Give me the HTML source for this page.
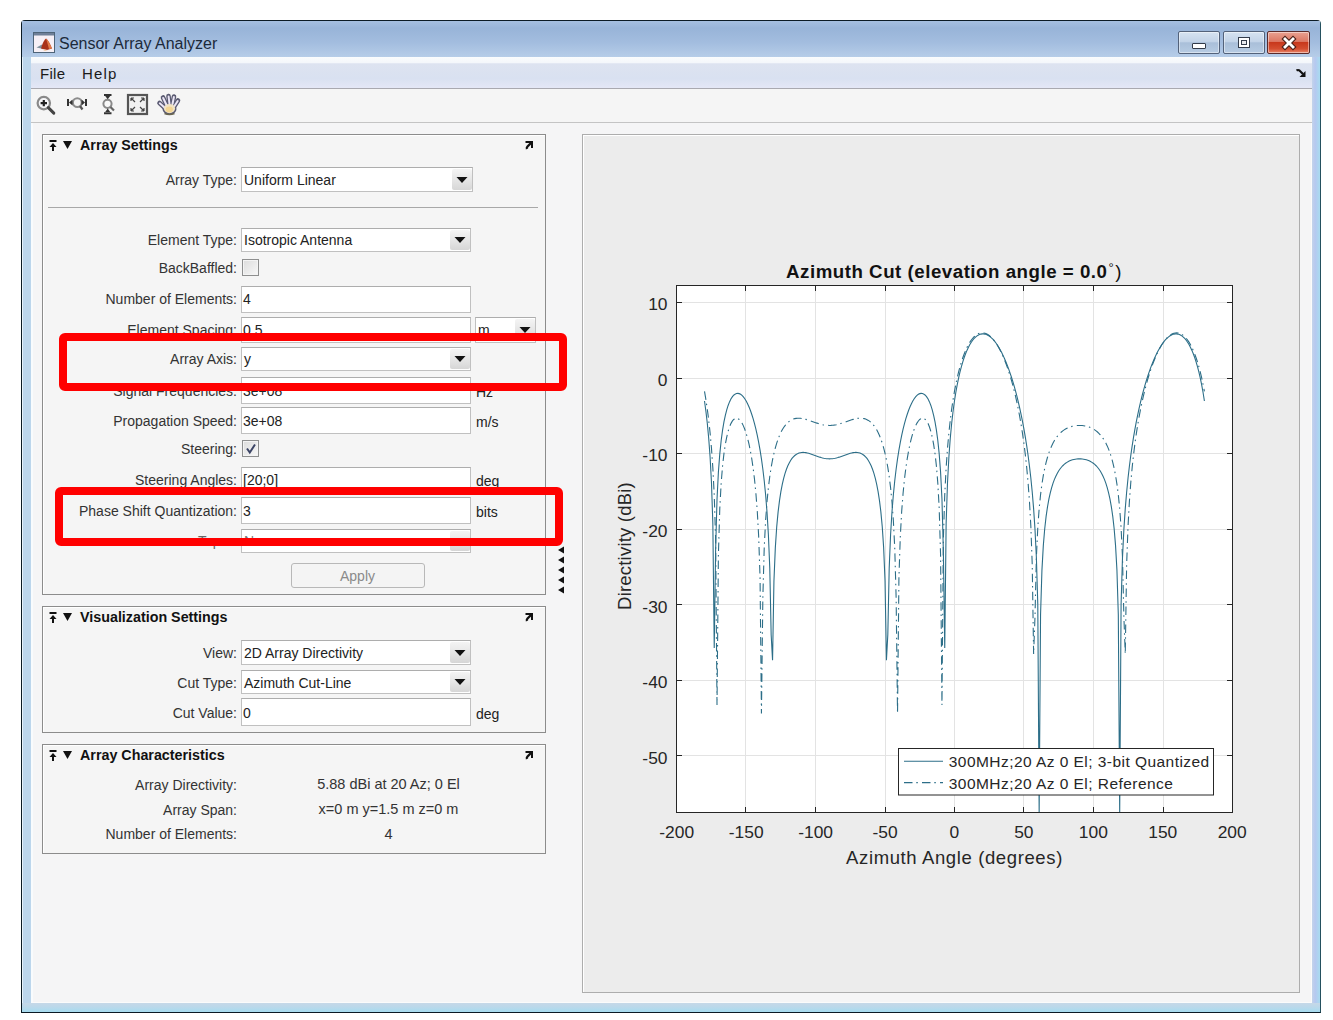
<!DOCTYPE html>
<html><head><meta charset="utf-8"><style>
*{margin:0;padding:0;box-sizing:content-box}
html,body{width:1333px;height:1020px;overflow:hidden;background:#fff;font-family:"Liberation Sans",sans-serif}
.t{position:absolute;white-space:nowrap;line-height:normal;-webkit-font-smoothing:antialiased}
#frame{position:absolute;left:21px;top:20px;width:1298px;height:991px;border:1px solid #0b1a24;border-right-color:#24505e;border-radius:4px 4px 0 0;background:#bcd6ec;
 box-shadow: inset 1px 1px 0 #e6f2fb, inset -1px -1px 0 #5e9ab0}
#titlebar{position:absolute;left:22px;top:21px;width:1298px;height:36px;background:linear-gradient(#a5bfe0 0%,#98b4d8 20%,#a3bddf 60%,#b6cde8 100%)}
.wb{position:absolute;top:31px;height:21px;border:1px solid #53627a;border-radius:2px;background:linear-gradient(#d6e3f1 0%,#c3d4e8 45%,#a9bfd9 52%,#b7cce3 100%);box-shadow:inset 0 0 0 1px rgba(255,255,255,0.45)}
.wb.close{border-color:#5a2a2a;background:linear-gradient(#e9a191 0%,#dc7864 45%,#c8381c 50%,#d44e30 80%,#e9866a 100%)}
#menubar{position:absolute;left:31px;top:57px;width:1281px;height:31px;background:linear-gradient(#fafcfd 0%,#f4f7fb 18%,#dde3f0 22%,#d9e1f1 70%,#e4e7f6 100%);border-bottom:1px solid #a9a9b0}
#toolbar{position:absolute;left:31px;top:89px;width:1281px;height:33px;background:#f5f5f5;border-bottom:1px solid #c4c4c4}
#client{position:absolute}
.panel{position:absolute;border:1px solid #8c8c8c;background:#f5f5f5;box-shadow:inset 1px 1px 0 #fff}
.tb{position:absolute;box-sizing:border-box;background:#fff;border:1px solid #c0c0c0;border-top-color:#adadad}
.ddb{position:absolute;background:linear-gradient(#f4f4f4 0%,#e6e6e6 50%,#d6d6d6 100%);border-radius:2px}
.cb{position:absolute;width:15px;height:15px;border:1px solid #8e8f8f;background:linear-gradient(135deg,#dcdcdc,#f8f8f8);box-shadow:inset 0 0 0 1px #f4f4f4}
.btn{position:absolute;border:1px solid #b8b8b8;border-radius:3px;background:#f4f4f4}
#plotpanel{position:absolute;left:582px;top:134px;width:716px;height:857px;border:1px solid #adadad;background:#ececec;box-shadow:inset 1px 1px 0 #fff}
.red{position:absolute;border:8px solid #f00;border-radius:6px}
</style></head>
<body>
<div id="frame"></div><div style="position:absolute;left:1312px;top:57px;width:8px;height:955px;background:linear-gradient(90deg,#c4d4ea,#b6c8f0 40%,#a8dcf0 100%)"></div><div style="position:absolute;left:22px;top:1003px;width:1298px;height:9px;background:linear-gradient(#c6d8e8 0%,#bcd8ea 40%,#a6dcf0 100%)"></div><div id="titlebar"></div><div id="client" style="left:31px;top:57px;width:1281px;height:946px;background:#f5f5f6;box-shadow:inset 2px 0 0 #f8fbfd, inset -1px -1px 0 #fbfbfb"></div><svg style="position:absolute;left:33px;top:32px" width="22" height="21" viewBox="0 0 22 21">
<rect x="0.5" y="0.5" width="21" height="20" fill="#f6f0f6" stroke="#4e6478"/>
<rect x="1" y="1" width="20" height="2.5" fill="#6f8098"/>
<path d="M3.5 15.5 L9 12.5 L10.5 17 Z" fill="#7f909c"/>
<path d="M8 16.5 Q10.5 8 13 6.5 Q15.5 8 19 16.5 L14 18 Z" fill="#a8321a"/>
<path d="M13 6.5 Q16 9 19 16.5 L16 17 Q14.5 11 13 6.5 Z" fill="#e07a48"/>
<path d="M9 17.5 L15 18 L12 19 Z" fill="#f0c8a0"/>
</svg><div class="t" style="left:59px;top:35.02px;font-size:16px;font-weight:normal;color:#1c2a3a;">Sensor Array Analyzer</div><div class="wb" style="left:1178px;width:40px"><div style="position:absolute;left:13px;top:11px;width:12px;height:4px;background:#fff;border:1px solid #333c4a;border-radius:1px"></div></div>
<div class="wb" style="left:1223px;width:40px"><div style="position:absolute;left:13.5px;top:4.5px;width:10px;height:9px;background:#fff;border:1.5px solid #333c4a;"></div><div style="position:absolute;left:17px;top:8px;width:4px;height:3px;border:1.5px solid #333c4a;background:#e8eaee"></div></div>
<div class="wb close" style="left:1267px;width:41px"><svg style="position:absolute;left:12px;top:3px" width="18" height="16" viewBox="0 0 18 16"><path d="M5 4 L13 12 M13 4 L5 12" stroke="#4a2018" stroke-width="5" stroke-linecap="square"/><path d="M5 4 L13 12 M13 4 L5 12" stroke="#fff" stroke-width="2.8" stroke-linecap="square"/></svg></div><div id="menubar"></div><div class="t" style="left:40px;top:65.42px;font-size:15px;font-weight:normal;color:#1a1a1a;letter-spacing:0.3px">File</div><div class="t" style="left:82px;top:65.42px;font-size:15px;font-weight:normal;color:#1a1a1a;letter-spacing:1.2px">Help</div><svg style="position:absolute;left:1295px;top:68px" width="12" height="10" viewBox="0 0 12 10"><path d="M1.5 2.5 Q3 1.5 4.5 2.5 L8 6" stroke="#111" stroke-width="2.2" fill="none"/><path d="M4.5 9 L10.5 9 L10.5 3 Z" fill="#111"/></svg><div id="toolbar"></div><svg style="position:absolute;left:34px;top:93px" width="150" height="24" viewBox="0 0 150 24">
 <g fill="none" stroke="#555" transform="translate(-0.7,0.6)">
  <circle cx="10.5" cy="9.5" r="6.2" stroke-width="2.2" stroke="#8a8a8a" fill="#f6f6f8"/>
  <path d="M15 14 L20.5 19.5" stroke-width="3" stroke-linecap="round" stroke="#444"/>
  <path d="M7.3 9.5 H13.7 M10.5 6.3 V12.7" stroke="#222" stroke-width="2.2"/>
 </g>
 <g fill="none" stroke="#555">
  <circle cx="43.3" cy="9.6" r="4.4" stroke-width="2" stroke="#8c8c8c"/>
  <path d="M46 13 L48.5 16.5" stroke-width="2.2" stroke="#555"/>
  <path d="M34 6 V13 M52 6 V13" stroke="#333" stroke-width="2"/>
  <path d="M35 9.5 L38.5 6.5 V12.5 Z M51 9.5 L47.5 6.5 V12.5 Z" fill="#333" stroke="none"/>
 </g>
 <g fill="none" stroke="#555">
  <circle cx="73.5" cy="10.8" r="4.1" stroke-width="2" stroke="#8a8a8a" fill="#f8f8f8"/>
  <path d="M76.5 14 L80 17.5" stroke-width="2.2" stroke="#666"/>
  <path d="M70 2 H77.5 M70 20.2 H77.5" stroke="#333" stroke-width="2"/>
  <path d="M73.7 6.2 L71.2 3 H76.2 Z M73.7 15.6 L71.2 19 H76.2 Z" fill="#333" stroke="none"/>
 </g>
 <g>
  <rect x="94" y="2" width="19" height="19" fill="#f0f0f0" stroke="#555" stroke-width="2.2"/>
  <path d="M97 5 L101 9 M97 5 H100 M97 5 V8 M110 5 L106 9 M110 5 H107 M110 5 V8 M97 18 L101 14 M97 18 H100 M97 18 V15 M110 18 L106 14 M110 18 H107 M110 18 V15" stroke="#444" stroke-width="1.2" fill="none"/>
 </g>
 <g transform="translate(123,1)">
  <g stroke="#5a5a72" stroke-width="4.6" stroke-linecap="round" fill="none">
   <path d="M8 14 L2.5 9"/><path d="M9.5 11 L6 3.5"/><path d="M12.5 10 L11.5 2"/><path d="M15.5 10 L17 2.5"/><path d="M17.5 12 L21 6.5"/>
  </g>
  <ellipse cx="12.5" cy="15" rx="7" ry="5.8" fill="#5a5a72"/>
  <g stroke="#ebe6f6" stroke-width="2" stroke-linecap="round" fill="none">
   <path d="M8 14 L2.8 9.3"/><path d="M9.5 11 L6.2 4"/><path d="M12.5 10 L11.6 2.5"/><path d="M15.5 10 L16.9 3"/><path d="M17.5 12 L20.7 7"/>
  </g>
  <ellipse cx="12.5" cy="14.6" rx="5.6" ry="4.6" fill="#f1e3c4"/>
  <ellipse cx="12.3" cy="15.5" rx="3.6" ry="3" fill="#f3d592"/>
  <path d="M7.5 19.5 Q12.5 21.5 17.5 19.5" stroke="#6a6650" stroke-width="1.6" fill="none"/>
 </g>
</svg><div class="panel" style="left:42px;top:134px;width:502px;height:459px"></div><svg style="position:absolute;left:49px;top:140px" width="24" height="12" viewBox="0 0 24 12">
<path d="M0.5 1 H7.5" stroke="#111" stroke-width="2"/><path d="M4 3 L0.5 7 H7.5 Z" fill="#111"/><path d="M4 6 V11" stroke="#111" stroke-width="2"/>
<path d="M14 1 H23 L18.5 9 Z" fill="#111"/></svg><div class="t" style="left:80px;top:136.56px;font-size:14.3px;font-weight:bold;color:#111;">Array Settings</div><svg style="position:absolute;left:524px;top:140px" width="10" height="10" viewBox="0 0 10 10"><path d="M1.5 2 H8 V8" stroke="#111" stroke-width="2" fill="none"/><path d="M7.5 2.5 L3.5 6.5 Q2.5 7.5 3 9" stroke="#111" stroke-width="2.4" fill="none"/></svg><div class="panel" style="left:42px;top:606px;width:502px;height:125px"></div><svg style="position:absolute;left:49px;top:612px" width="24" height="12" viewBox="0 0 24 12">
<path d="M0.5 1 H7.5" stroke="#111" stroke-width="2"/><path d="M4 3 L0.5 7 H7.5 Z" fill="#111"/><path d="M4 6 V11" stroke="#111" stroke-width="2"/>
<path d="M14 1 H23 L18.5 9 Z" fill="#111"/></svg><div class="t" style="left:80px;top:608.56px;font-size:14.3px;font-weight:bold;color:#111;">Visualization Settings</div><svg style="position:absolute;left:524px;top:612px" width="10" height="10" viewBox="0 0 10 10"><path d="M1.5 2 H8 V8" stroke="#111" stroke-width="2" fill="none"/><path d="M7.5 2.5 L3.5 6.5 Q2.5 7.5 3 9" stroke="#111" stroke-width="2.4" fill="none"/></svg><div class="panel" style="left:42px;top:744px;width:502px;height:108px"></div><svg style="position:absolute;left:49px;top:750px" width="24" height="12" viewBox="0 0 24 12">
<path d="M0.5 1 H7.5" stroke="#111" stroke-width="2"/><path d="M4 3 L0.5 7 H7.5 Z" fill="#111"/><path d="M4 6 V11" stroke="#111" stroke-width="2"/>
<path d="M14 1 H23 L18.5 9 Z" fill="#111"/></svg><div class="t" style="left:80px;top:746.56px;font-size:14.3px;font-weight:bold;color:#111;">Array Characteristics</div><svg style="position:absolute;left:524px;top:750px" width="10" height="10" viewBox="0 0 10 10"><path d="M1.5 2 H8 V8" stroke="#111" stroke-width="2" fill="none"/><path d="M7.5 2.5 L3.5 6.5 Q2.5 7.5 3 9" stroke="#111" stroke-width="2.4" fill="none"/></svg><div class="t" style="left:-563px;width:800px;text-align:right;top:171.83px;font-size:14px;font-weight:normal;color:#333;">Array Type:</div><div class="tb" style="left:241px;top:167px;width:232px;height:25px"></div><div class="ddb" style="left:452px;top:169px;width:20px;height:21px"></div><svg style="position:absolute;left:456px;top:175.5px" width="12" height="8" viewBox="0 0 12 8"><path d="M0.5 1 H11.5 L6 7 Z" fill="#111"/></svg><div class="t" style="left:244px;top:171.83px;font-size:14px;font-weight:normal;color:#222;">Uniform Linear</div><div class="t" style="left:-563px;width:800px;text-align:right;top:232.33px;font-size:14px;font-weight:normal;color:#333;">Element Type:</div><div class="tb" style="left:241px;top:228px;width:230px;height:24px"></div><div class="ddb" style="left:450px;top:230px;width:20px;height:20px"></div><svg style="position:absolute;left:454px;top:236.0px" width="12" height="8" viewBox="0 0 12 8"><path d="M0.5 1 H11.5 L6 7 Z" fill="#111"/></svg><div class="t" style="left:244px;top:232.33px;font-size:14px;font-weight:normal;color:#222;">Isotropic Antenna</div><div class="t" style="left:-563px;width:800px;text-align:right;top:260.33px;font-size:14px;font-weight:normal;color:#333;">BackBaffled:</div><div class="cb" style="left:242px;top:259px"></div><div class="t" style="left:-563px;width:800px;text-align:right;top:291.33px;font-size:14px;font-weight:normal;color:#333;">Number of Elements:</div><div class="tb" style="left:241px;top:285.5px;width:230px;height:27.0px"></div><div class="t" style="left:243px;top:291.33px;font-size:14px;font-weight:normal;color:#222;">4</div><div class="t" style="left:-563px;width:800px;text-align:right;top:322.08px;font-size:14px;font-weight:normal;color:#333;">Element Spacing:</div><div class="tb" style="left:241px;top:316.5px;width:230px;height:26.5px"></div><div class="t" style="left:243px;top:322.08px;font-size:14px;font-weight:normal;color:#222;">0.5</div><div class="tb" style="left:475px;top:317px;width:61px;height:26px"></div><div class="ddb" style="left:515px;top:319px;width:20px;height:22px"></div><svg style="position:absolute;left:519px;top:326.0px" width="12" height="8" viewBox="0 0 12 8"><path d="M0.5 1 H11.5 L6 7 Z" fill="#111"/></svg><div class="t" style="left:478px;top:322.33px;font-size:14px;font-weight:normal;color:#222;">m</div><div class="t" style="left:-563px;width:800px;text-align:right;top:351.33px;font-size:14px;font-weight:normal;color:#333;">Array Axis:</div><div class="tb" style="left:241px;top:346.7px;width:230px;height:24.600000000000023px"></div><div class="ddb" style="left:450px;top:348.7px;width:20px;height:20.600000000000023px"></div><svg style="position:absolute;left:454px;top:355.0px" width="12" height="8" viewBox="0 0 12 8"><path d="M0.5 1 H11.5 L6 7 Z" fill="#111"/></svg><div class="t" style="left:244px;top:351.33px;font-size:14px;font-weight:normal;color:#222;">y</div><div class="t" style="left:-563px;width:800px;text-align:right;top:382.58px;font-size:14px;font-weight:normal;color:#333;">Signal Frequencies:</div><div class="tb" style="left:241px;top:376.5px;width:230px;height:27.5px"></div><div class="t" style="left:243px;top:382.58px;font-size:14px;font-weight:normal;color:#222;">3e+08</div><div class="t" style="left:476px;top:383.58px;font-size:14px;font-weight:normal;color:#222;">Hz</div><div class="t" style="left:-563px;width:800px;text-align:right;top:413.28px;font-size:14px;font-weight:normal;color:#333;">Propagation Speed:</div><div class="tb" style="left:241px;top:407.4px;width:230px;height:27.100000000000023px"></div><div class="t" style="left:243px;top:413.28px;font-size:14px;font-weight:normal;color:#222;">3e+08</div><div class="t" style="left:476px;top:414.28px;font-size:14px;font-weight:normal;color:#222;">m/s</div><div class="t" style="left:-563px;width:800px;text-align:right;top:441.33px;font-size:14px;font-weight:normal;color:#333;">Steering:</div><div class="cb" style="left:242px;top:440px"></div><svg style="position:absolute;left:244px;top:442px" width="13" height="13" viewBox="0 0 13 13"><path d="M3 6.5 L5.8 10.5 L11 2.5" stroke="#3c4566" stroke-width="2" fill="none"/></svg><div class="t" style="left:-563px;width:800px;text-align:right;top:472.33px;font-size:14px;font-weight:normal;color:#333;">Steering Angles:</div><div class="tb" style="left:241px;top:466.5px;width:230px;height:27.0px"></div><div class="t" style="left:243px;top:472.33px;font-size:14px;font-weight:normal;color:#222;">[20;0]</div><div class="t" style="left:476px;top:473.33px;font-size:14px;font-weight:normal;color:#222;">deg</div><div class="t" style="left:-563px;width:800px;text-align:right;top:503.13px;font-size:14px;font-weight:normal;color:#333;">Phase Shift Quantization:</div><div class="tb" style="left:241px;top:497.4px;width:230px;height:26.800000000000068px"></div><div class="t" style="left:243px;top:503.13px;font-size:14px;font-weight:normal;color:#222;">3</div><div class="t" style="left:476px;top:504.13px;font-size:14px;font-weight:normal;color:#222;">bits</div><div class="t" style="left:-563px;width:800px;text-align:right;top:533.13px;font-size:14px;font-weight:normal;color:#666;">Taper:</div><div class="tb" style="left:241px;top:528.6px;width:230px;height:24.399999999999977px"></div><div class="ddb" style="left:450px;top:530.6px;width:20px;height:20.399999999999977px"></div><svg style="position:absolute;left:454px;top:536.8px" width="12" height="8" viewBox="0 0 12 8"><path d="M0.5 1 H11.5 L6 7 Z" fill="#111"/></svg><div class="t" style="left:244px;top:533.13px;font-size:14px;font-weight:normal;color:#777;">None</div><div style="position:absolute;left:48px;top:207px;width:490px;height:1px;background:#a8a8a8"></div><div class="btn" style="left:291px;top:563px;width:132px;height:23px"></div><div class="t" style="left:-42.5px;width:800px;text-align:center;top:567.83px;font-size:14px;font-weight:normal;color:#8a8a8a;">Apply</div><svg style="position:absolute;left:557px;top:545.5px" width="8" height="8" viewBox="0 0 8 8"><path d="M1 4 L7 0.5 V7.5 Z" fill="#111"/></svg><svg style="position:absolute;left:557px;top:555.7px" width="8" height="8" viewBox="0 0 8 8"><path d="M1 4 L7 0.5 V7.5 Z" fill="#111"/></svg><svg style="position:absolute;left:557px;top:565.9px" width="8" height="8" viewBox="0 0 8 8"><path d="M1 4 L7 0.5 V7.5 Z" fill="#111"/></svg><svg style="position:absolute;left:557px;top:576.1px" width="8" height="8" viewBox="0 0 8 8"><path d="M1 4 L7 0.5 V7.5 Z" fill="#111"/></svg><svg style="position:absolute;left:557px;top:586.3px" width="8" height="8" viewBox="0 0 8 8"><path d="M1 4 L7 0.5 V7.5 Z" fill="#111"/></svg><div class="t" style="left:-563px;width:800px;text-align:right;top:644.83px;font-size:14px;font-weight:normal;color:#333;">View:</div><div class="tb" style="left:241px;top:640.4px;width:230px;height:24.200000000000045px"></div><div class="ddb" style="left:450px;top:642.4px;width:20px;height:20.200000000000045px"></div><svg style="position:absolute;left:454px;top:648.5px" width="12" height="8" viewBox="0 0 12 8"><path d="M0.5 1 H11.5 L6 7 Z" fill="#111"/></svg><div class="t" style="left:244px;top:644.83px;font-size:14px;font-weight:normal;color:#222;">2D Array Directivity</div><div class="t" style="left:-563px;width:800px;text-align:right;top:674.63px;font-size:14px;font-weight:normal;color:#333;">Cut Type:</div><div class="tb" style="left:241px;top:670.2px;width:230px;height:24.199999999999932px"></div><div class="ddb" style="left:450px;top:672.2px;width:20px;height:20.199999999999932px"></div><svg style="position:absolute;left:454px;top:678.3px" width="12" height="8" viewBox="0 0 12 8"><path d="M0.5 1 H11.5 L6 7 Z" fill="#111"/></svg><div class="t" style="left:244px;top:674.63px;font-size:14px;font-weight:normal;color:#222;">Azimuth Cut-Line</div><div class="t" style="left:-563px;width:800px;text-align:right;top:704.63px;font-size:14px;font-weight:normal;color:#333;">Cut Value:</div><div class="tb" style="left:241px;top:698.4px;width:230px;height:27.800000000000068px"></div><div class="t" style="left:243px;top:704.63px;font-size:14px;font-weight:normal;color:#222;">0</div><div class="t" style="left:476px;top:706.33px;font-size:14px;font-weight:normal;color:#222;">deg</div><div class="t" style="left:-563px;width:800px;text-align:right;top:776.93px;font-size:14px;font-weight:normal;color:#333;">Array Directivity:</div><div class="t" style="left:-11.5px;width:800px;text-align:center;top:776.48px;font-size:14.5px;font-weight:normal;color:#333;">5.88 dBi at 20 Az; 0 El</div><div class="t" style="left:-563px;width:800px;text-align:right;top:801.53px;font-size:14px;font-weight:normal;color:#333;">Array Span:</div><div class="t" style="left:-11.5px;width:800px;text-align:center;top:801.08px;font-size:14.5px;font-weight:normal;color:#333;">x=0 m y=1.5 m z=0 m</div><div class="t" style="left:-563px;width:800px;text-align:right;top:826.13px;font-size:14px;font-weight:normal;color:#333;">Number of Elements:</div><div class="t" style="left:-11.5px;width:800px;text-align:center;top:825.68px;font-size:14.5px;font-weight:normal;color:#333;">4</div><div id="plotpanel"></div><svg style="position:absolute;left:0;top:0" width="1333" height="1020" viewBox="0 0 1333 1020"><rect x="676.5" y="285.5" width="556.0" height="527.0" fill="#fff"/><path d="M745.5 285.5 V812.5 M815.5 285.5 V812.5 M885.5 285.5 V812.5 M954.5 285.5 V812.5 M1023.5 285.5 V812.5 M1093.5 285.5 V812.5 M1163.5 285.5 V812.5 M676.5 755.5 H1232.5 M676.5 680.5 H1232.5 M676.5 604.5 H1232.5 M676.5 529.5 H1232.5 M676.5 453.5 H1232.5 M676.5 378.5 H1232.5 M676.5 302.5 H1232.5" stroke="#e3e3e3" stroke-width="1" fill="none"/><defs><clipPath id="ax"><rect x="676.5" y="285.5" width="556.0" height="527.0"/></clipPath></defs><g clip-path="url(#ax)"><polyline points="704.51,391.46 705.90,399.68 707.29,409.04 708.68,419.88 710.07,432.65 711.46,448.15 712.84,467.85 714.23,494.96 715.62,539.29 717.01,704.90 718.40,554.79 719.79,508.27 721.18,482.92 722.56,465.99 723.95,453.67 725.34,444.32 726.73,437.06 728.12,431.38 729.51,426.97 730.90,423.61 732.28,421.14 733.67,419.46 735.06,418.50 736.45,418.20 737.84,418.53 739.23,419.46 740.62,420.99 742.00,423.12 743.39,425.87 744.78,429.27 746.17,433.37 747.56,438.22 748.95,443.93 750.34,450.64 751.72,458.53 753.11,467.90 754.50,479.21 755.89,493.21 757.28,511.30 758.67,536.52 760.06,577.95 761.44,713.53 762.83,598.20 764.22,548.02 765.61,520.52 767.00,501.73 768.39,487.62 769.78,476.47 771.16,467.36 772.55,459.76 773.94,453.34 775.33,447.84 776.72,443.12 778.11,439.03 779.50,435.50 780.88,432.44 782.27,429.80 783.66,427.52 785.05,425.57 786.44,423.91 787.83,422.51 789.22,421.35 790.61,420.40 791.99,419.65 793.38,419.07 794.77,418.65 796.16,418.38 797.55,418.23 798.94,418.20 800.33,418.27 801.71,418.44 803.10,418.68 804.49,418.99 805.88,419.36 807.27,419.77 808.66,420.22 810.05,420.70 811.43,421.19 812.82,421.69 814.21,422.19 815.60,422.68 816.99,423.14 818.38,423.59 819.77,423.99 821.15,424.36 822.54,424.68 823.93,424.95 825.32,425.16 826.71,425.32 828.10,425.41 829.49,425.45 830.87,425.41 832.26,425.32 833.65,425.16 835.04,424.95 836.43,424.68 837.82,424.36 839.21,423.99 840.59,423.59 841.98,423.14 843.37,422.68 844.76,422.19 846.15,421.69 847.54,421.19 848.93,420.70 850.32,420.22 851.70,419.77 853.09,419.36 854.48,418.99 855.87,418.68 857.26,418.44 858.65,418.27 860.04,418.20 861.42,418.23 862.81,418.38 864.20,418.65 865.59,419.07 866.98,419.65 868.37,420.40 869.76,421.35 871.14,422.51 872.53,423.91 873.92,425.57 875.31,427.52 876.70,429.80 878.09,432.44 879.48,435.50 880.86,439.03 882.25,443.12 883.64,447.84 885.03,453.34 886.42,459.76 887.81,467.36 889.20,476.47 890.58,487.62 891.97,501.73 893.36,520.52 894.75,548.02 896.14,598.20 897.53,713.53 898.92,577.95 900.30,536.52 901.69,511.30 903.08,493.21 904.47,479.21 905.86,467.90 907.25,458.53 908.64,450.64 910.02,443.93 911.41,438.22 912.80,433.37 914.19,429.27 915.58,425.87 916.97,423.12 918.36,420.99 919.75,419.46 921.13,418.53 922.52,418.20 923.91,418.50 925.30,419.46 926.69,421.14 928.08,423.61 929.47,426.97 930.85,431.38 932.24,437.06 933.63,444.32 935.02,453.67 936.41,465.99 937.80,482.92 939.19,508.27 940.57,554.79 941.96,704.90 943.35,539.29 944.74,494.96 946.13,467.85 947.52,448.15 948.91,432.65 950.29,419.88 951.68,409.04 953.07,399.68 954.46,391.46 955.85,384.19 957.24,377.71 958.63,371.90 960.01,366.68 961.40,361.99 962.79,357.76 964.18,353.96 965.57,350.55 966.96,347.50 968.35,344.79 969.73,342.40 971.12,340.30 972.51,338.49 973.90,336.94 975.29,335.66 976.68,334.62 978.07,333.83 979.45,333.27 980.84,332.94 982.23,332.83 983.62,332.94 985.01,333.26 986.40,333.79 987.79,334.53 989.18,335.48 990.56,336.64 991.95,338.00 993.34,339.56 994.73,341.33 996.12,343.31 997.51,345.49 998.90,347.89 1000.28,350.51 1001.67,353.35 1003.06,356.41 1004.45,359.72 1005.84,363.27 1007.23,367.07 1008.62,371.15 1010.00,375.52 1011.39,380.19 1012.78,385.20 1014.17,390.57 1015.56,396.34 1016.95,402.55 1018.34,409.27 1019.72,416.58 1021.11,424.57 1022.50,433.38 1023.89,443.21 1025.28,454.31 1026.67,467.13 1028.06,482.32 1029.44,501.13 1030.83,526.09 1032.22,564.15 1033.61,653.97 1035.00,616.40 1036.39,556.95 1037.78,527.75 1039.16,508.70 1040.55,494.81 1041.94,484.05 1043.33,475.41 1044.72,468.29 1046.11,462.32 1047.50,457.26 1048.88,452.91 1050.27,449.15 1051.66,445.89 1053.05,443.05 1054.44,440.56 1055.83,438.37 1057.22,436.46 1058.61,434.78 1059.99,433.30 1061.38,432.00 1062.77,430.87 1064.16,429.88 1065.55,429.02 1066.94,428.27 1068.33,427.63 1069.71,427.09 1071.10,426.64 1072.49,426.26 1073.88,425.96 1075.27,425.73 1076.66,425.57 1078.05,425.48 1079.43,425.45 1080.82,425.48 1082.21,425.57 1083.60,425.73 1084.99,425.96 1086.38,426.26 1087.77,426.64 1089.15,427.09 1090.54,427.63 1091.93,428.27 1093.32,429.02 1094.71,429.88 1096.10,430.87 1097.49,432.00 1098.87,433.30 1100.26,434.78 1101.65,436.46 1103.04,438.37 1104.43,440.56 1105.82,443.05 1107.21,445.89 1108.59,449.15 1109.98,452.91 1111.37,457.26 1112.76,462.32 1114.15,468.29 1115.54,475.41 1116.93,484.05 1118.31,494.81 1119.70,508.70 1121.09,527.75 1122.48,556.95 1123.87,616.40 1125.26,653.97 1126.65,564.15 1128.04,526.09 1129.42,501.13 1130.81,482.32 1132.20,467.13 1133.59,454.31 1134.98,443.21 1136.37,433.38 1137.76,424.57 1139.14,416.58 1140.53,409.27 1141.92,402.55 1143.31,396.34 1144.70,390.57 1146.09,385.20 1147.48,380.19 1148.86,375.52 1150.25,371.15 1151.64,367.07 1153.03,363.27 1154.42,359.72 1155.81,356.41 1157.20,353.35 1158.58,350.51 1159.97,347.89 1161.36,345.49 1162.75,343.31 1164.14,341.33 1165.53,339.56 1166.92,338.00 1168.30,336.64 1169.69,335.48 1171.08,334.53 1172.47,333.79 1173.86,333.26 1175.25,332.94 1176.64,332.83 1178.02,332.94 1179.41,333.27 1180.80,333.83 1182.19,334.62 1183.58,335.66 1184.97,336.94 1186.36,338.49 1187.74,340.30 1189.13,342.40 1190.52,344.79 1191.91,347.50 1193.30,350.55 1194.69,353.96 1196.08,357.76 1197.47,361.99 1198.85,366.68 1200.24,371.90 1201.63,377.71 1203.02,384.19 1204.41,391.46" fill="none" stroke="#2c6e88" stroke-width="1.1" stroke-dasharray="8.5 3.8 1.5 4.2"/><polyline points="704.51,401.03 705.90,411.23 707.29,423.30 708.68,438.00 710.07,456.69 711.46,482.35 712.84,523.63 714.23,647.91 715.62,550.08 717.01,499.20 718.40,472.05 719.79,453.87 721.18,440.49 722.56,430.15 723.95,421.92 725.34,415.27 726.73,409.86 728.12,405.45 729.51,401.89 730.90,399.06 732.28,396.86 733.67,395.24 735.06,394.14 736.45,393.53 737.84,393.37 739.23,393.64 740.62,394.32 742.00,395.41 743.39,396.89 744.78,398.76 746.17,401.03 747.56,403.71 748.95,406.79 750.34,410.30 751.72,414.27 753.11,418.71 754.50,423.68 755.89,429.22 757.28,435.41 758.67,442.32 760.06,450.10 761.44,458.91 762.83,468.99 764.22,480.73 765.61,494.73 767.00,512.04 768.39,534.76 769.78,568.17 771.16,634.70 772.55,660.30 773.94,580.96 775.33,547.61 776.72,526.75 778.11,511.89 779.50,500.58 780.88,491.62 782.27,484.37 783.66,478.40 785.05,473.43 786.44,469.28 787.83,465.80 789.22,462.89 790.61,460.46 791.99,458.45 793.38,456.81 794.77,455.48 796.16,454.44 797.55,453.64 798.94,453.06 800.33,452.68 801.71,452.47 803.10,452.40 804.49,452.47 805.88,452.65 807.27,452.93 808.66,453.28 810.05,453.69 811.43,454.15 812.82,454.65 814.21,455.16 815.60,455.68 816.99,456.19 818.38,456.68 819.77,457.15 821.15,457.57 822.54,457.95 823.93,458.26 825.32,458.52 826.71,458.70 828.10,458.81 829.49,458.85 830.87,458.81 832.26,458.70 833.65,458.52 835.04,458.26 836.43,457.95 837.82,457.57 839.21,457.15 840.59,456.68 841.98,456.19 843.37,455.68 844.76,455.16 846.15,454.65 847.54,454.15 848.93,453.69 850.32,453.28 851.70,452.93 853.09,452.65 854.48,452.47 855.87,452.40 857.26,452.47 858.65,452.68 860.04,453.06 861.42,453.64 862.81,454.44 864.20,455.48 865.59,456.81 866.98,458.45 868.37,460.46 869.76,462.89 871.14,465.80 872.53,469.28 873.92,473.43 875.31,478.40 876.70,484.37 878.09,491.62 879.48,500.58 880.86,511.89 882.25,526.75 883.64,547.61 885.03,580.96 886.42,660.30 887.81,634.70 889.20,568.17 890.58,534.76 891.97,512.04 893.36,494.73 894.75,480.73 896.14,468.99 897.53,458.91 898.92,450.10 900.30,442.32 901.69,435.41 903.08,429.22 904.47,423.68 905.86,418.71 907.25,414.27 908.64,410.30 910.02,406.79 911.41,403.71 912.80,401.03 914.19,398.76 915.58,396.89 916.97,395.41 918.36,394.32 919.75,393.64 921.13,393.37 922.52,393.53 923.91,394.14 925.30,395.24 926.69,396.86 928.08,399.06 929.47,401.89 930.85,405.45 932.24,409.86 933.63,415.27 935.02,421.92 936.41,430.15 937.80,440.49 939.19,453.87 940.57,472.05 941.96,499.20 943.35,550.08 944.74,647.91 946.13,523.63 947.52,482.35 948.91,456.69 950.29,438.00 951.68,423.30 953.07,411.23 954.46,401.03 955.85,392.26 957.24,384.59 958.63,377.85 960.01,371.87 961.40,366.54 962.79,361.80 964.18,357.55 965.57,353.77 966.96,350.40 968.35,347.41 969.73,344.77 971.12,342.46 972.51,340.46 973.90,338.74 975.29,337.31 976.68,336.13 978.07,335.21 979.45,334.53 980.84,334.09 982.23,333.87 983.62,333.87 985.01,334.09 986.40,334.53 987.79,335.17 989.18,336.01 990.56,337.05 991.95,338.30 993.34,339.74 994.73,341.38 996.12,343.22 997.51,345.25 998.90,347.48 1000.28,349.92 1001.67,352.55 1003.06,355.39 1004.45,358.43 1005.84,361.69 1007.23,365.17 1008.62,368.87 1010.00,372.81 1011.39,377.00 1012.78,381.44 1014.17,386.15 1015.56,391.15 1016.95,396.46 1018.34,402.12 1019.72,408.14 1021.11,414.57 1022.50,421.46 1023.89,428.87 1025.28,436.90 1026.67,445.64 1028.06,455.25 1029.44,465.95 1030.83,478.03 1032.22,491.99 1033.61,508.63 1035.00,529.45 1036.39,557.81 1037.78,604.13 1039.16,812.80 1040.55,614.71 1041.94,570.10 1043.33,545.41 1044.72,528.73 1046.11,516.40 1047.50,506.82 1048.88,499.13 1050.27,492.82 1051.66,487.57 1053.05,483.14 1054.44,479.38 1055.83,476.17 1057.22,473.41 1058.61,471.05 1059.99,469.00 1061.38,467.24 1062.77,465.73 1064.16,464.43 1065.55,463.31 1066.94,462.35 1068.33,461.54 1069.71,460.86 1071.10,460.30 1072.49,459.84 1073.88,459.48 1075.27,459.20 1076.66,459.01 1078.05,458.89 1079.43,458.85 1080.82,458.89 1082.21,459.01 1083.60,459.20 1084.99,459.48 1086.38,459.84 1087.77,460.30 1089.15,460.86 1090.54,461.54 1091.93,462.35 1093.32,463.31 1094.71,464.43 1096.10,465.73 1097.49,467.24 1098.87,469.00 1100.26,471.05 1101.65,473.41 1103.04,476.17 1104.43,479.38 1105.82,483.14 1107.21,487.57 1108.59,492.82 1109.98,499.13 1111.37,506.82 1112.76,516.40 1114.15,528.73 1115.54,545.41 1116.93,570.10 1118.31,614.71 1119.70,812.80 1121.09,604.13 1122.48,557.81 1123.87,529.45 1125.26,508.63 1126.65,491.99 1128.04,478.03 1129.42,465.95 1130.81,455.25 1132.20,445.64 1133.59,436.90 1134.98,428.87 1136.37,421.46 1137.76,414.57 1139.14,408.14 1140.53,402.12 1141.92,396.46 1143.31,391.15 1144.70,386.15 1146.09,381.44 1147.48,377.00 1148.86,372.81 1150.25,368.87 1151.64,365.17 1153.03,361.69 1154.42,358.43 1155.81,355.39 1157.20,352.55 1158.58,349.92 1159.97,347.48 1161.36,345.25 1162.75,343.22 1164.14,341.38 1165.53,339.74 1166.92,338.30 1168.30,337.05 1169.69,336.01 1171.08,335.17 1172.47,334.53 1173.86,334.09 1175.25,333.87 1176.64,333.87 1178.02,334.09 1179.41,334.53 1180.80,335.21 1182.19,336.13 1183.58,337.31 1184.97,338.74 1186.36,340.46 1187.74,342.46 1189.13,344.77 1190.52,347.41 1191.91,350.40 1193.30,353.77 1194.69,357.55 1196.08,361.80 1197.47,366.54 1198.85,371.87 1200.24,377.85 1201.63,384.59 1203.02,392.26 1204.41,401.03" fill="none" stroke="#2c6e88" stroke-width="1.1"/></g><path d="M745.5 812.5 v-5.5 M745.5 285.5 v5.5 M815.5 812.5 v-5.5 M815.5 285.5 v5.5 M885.5 812.5 v-5.5 M885.5 285.5 v5.5 M954.5 812.5 v-5.5 M954.5 285.5 v5.5 M1023.5 812.5 v-5.5 M1023.5 285.5 v5.5 M1093.5 812.5 v-5.5 M1093.5 285.5 v5.5 M1163.5 812.5 v-5.5 M1163.5 285.5 v5.5 M676.5 755.5 h5.5 M1232.5 755.5 h-5.5 M676.5 680.5 h5.5 M1232.5 680.5 h-5.5 M676.5 604.5 h5.5 M1232.5 604.5 h-5.5 M676.5 529.5 h5.5 M1232.5 529.5 h-5.5 M676.5 453.5 h5.5 M1232.5 453.5 h-5.5 M676.5 378.5 h5.5 M1232.5 378.5 h-5.5 M676.5 302.5 h5.5 M1232.5 302.5 h-5.5" stroke="#262626" stroke-width="1" fill="none"/><rect x="676.5" y="285.5" width="556.0" height="527.0" fill="none" stroke="#262626" stroke-width="1"/><rect x="898.5" y="748.5" width="315" height="46.5" fill="#fff" stroke="#262626" stroke-width="1"/><path d="M904 761.2 H943" stroke="#2c6e88" stroke-width="1.1"/><path d="M904 782.6 H943" stroke="#2c6e88" stroke-width="1.1" stroke-dasharray="8.5 3.8 1.5 4.2"/></svg><div class="t" style="left:948.8px;top:753.47px;font-size:15.5px;font-weight:normal;color:#262626;letter-spacing:0.45px">300MHz;20 Az 0 El; 3-bit Quantized</div><div class="t" style="left:948.8px;top:774.57px;font-size:15.5px;font-weight:normal;color:#262626;letter-spacing:0.45px">300MHz;20 Az 0 El; Reference</div><div class="t" style="left:276.74px;width:800px;text-align:center;top:822.25px;font-size:17.4px;font-weight:normal;color:#262626;">-200</div><div class="t" style="left:346.1700000000001px;width:800px;text-align:center;top:822.25px;font-size:17.4px;font-weight:normal;color:#262626;">-150</div><div class="t" style="left:415.6px;width:800px;text-align:center;top:822.25px;font-size:17.4px;font-weight:normal;color:#262626;">-100</div><div class="t" style="left:485.03px;width:800px;text-align:center;top:822.25px;font-size:17.4px;font-weight:normal;color:#262626;">-50</div><div class="t" style="left:554.46px;width:800px;text-align:center;top:822.25px;font-size:17.4px;font-weight:normal;color:#262626;">0</div><div class="t" style="left:623.8900000000001px;width:800px;text-align:center;top:822.25px;font-size:17.4px;font-weight:normal;color:#262626;">50</div><div class="t" style="left:693.3200000000002px;width:800px;text-align:center;top:822.25px;font-size:17.4px;font-weight:normal;color:#262626;">100</div><div class="t" style="left:762.75px;width:800px;text-align:center;top:822.25px;font-size:17.4px;font-weight:normal;color:#262626;">150</div><div class="t" style="left:832.1800000000001px;width:800px;text-align:center;top:822.25px;font-size:17.4px;font-weight:normal;color:#262626;">200</div><div class="t" style="left:-132.5px;width:800px;text-align:right;top:747.57px;font-size:17.4px;font-weight:normal;color:#262626;">-50</div><div class="t" style="left:-132.5px;width:800px;text-align:right;top:672.05px;font-size:17.4px;font-weight:normal;color:#262626;">-40</div><div class="t" style="left:-132.5px;width:800px;text-align:right;top:596.52px;font-size:17.4px;font-weight:normal;color:#262626;">-30</div><div class="t" style="left:-132.5px;width:800px;text-align:right;top:521.00px;font-size:17.4px;font-weight:normal;color:#262626;">-20</div><div class="t" style="left:-132.5px;width:800px;text-align:right;top:445.48px;font-size:17.4px;font-weight:normal;color:#262626;">-10</div><div class="t" style="left:-132.5px;width:800px;text-align:right;top:369.95px;font-size:17.4px;font-weight:normal;color:#262626;">0</div><div class="t" style="left:-132.5px;width:800px;text-align:right;top:294.43px;font-size:17.4px;font-weight:normal;color:#262626;">10</div><div class="t" style="left:554.5px;width:800px;text-align:center;top:846.66px;font-size:18.5px;font-weight:normal;color:#262626;letter-spacing:0.62px">Azimuth Angle (degrees)</div><div class="t" style="left:554px;width:800px;text-align:center;top:261.38px;font-size:18.7px;font-weight:bold;color:#111;letter-spacing:0.52px">Azimuth Cut (elevation angle = 0.0<span style="position:relative;top:-6px;font-size:13px;font-weight:normal;margin-left:1px">&#176;</span><span style="font-weight:normal;margin-left:1px">)</span></div><div class="t" style="left:625px;top:546px;width:0;height:0"><div style="position:absolute;left:0;top:0;transform:translate(-50%,-50%) rotate(-90deg);white-space:nowrap;font-size:18.5px;letter-spacing:0.2px;color:#262626;line-height:1">Directivity (dBi)</div></div><div class="red" style="left:59px;top:333px;width:492px;height:42px"></div><div class="red" style="left:55px;top:487px;width:492px;height:42.6px"></div>
</body></html>
